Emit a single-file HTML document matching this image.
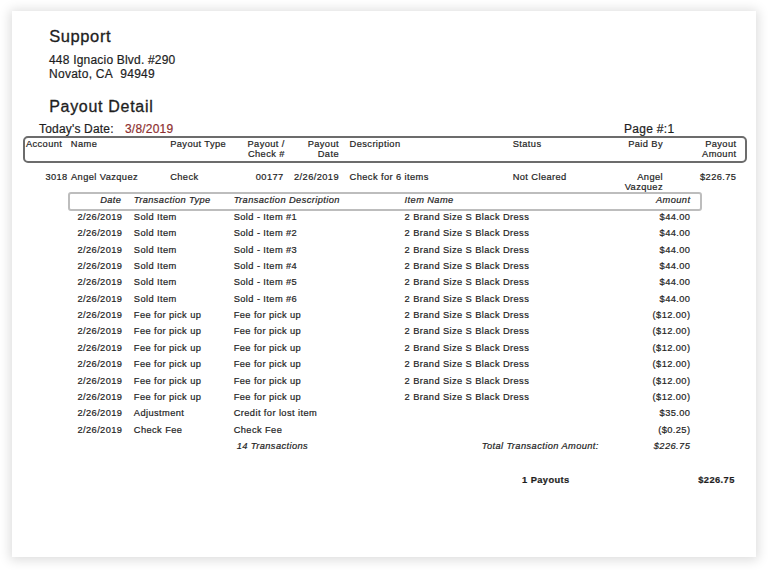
<!DOCTYPE html>
<html><head><meta charset="utf-8">
<style>
html,body{margin:0;padding:0;background:#fff;}
body{width:768px;height:570px;position:relative;overflow:hidden;font-family:"Liberation Sans",sans-serif;color:#1e1e1e;font-size:9.3px;letter-spacing:0.4px;}
#page{position:absolute;left:12px;top:10.5px;width:744px;height:546px;background:#fff;box-shadow:0 1px 11px 2px rgba(0,0,0,0.14);}
.t{position:absolute;white-space:nowrap;line-height:1;-webkit-text-stroke-width:0.2px;}
.i{font-style:italic;}
.b{font-weight:bold;}
.box{position:absolute;box-sizing:border-box;}
</style></head><body>
<div id="page"></div>
<div class="box" style="left:23px;top:136px;width:724px;height:27px;border:2px solid #6c6c6c;border-radius:5px;"></div>
<div class="box" style="left:68px;top:192px;width:634px;height:18.5px;border:2px solid #bdbdbd;border-radius:3px;"></div>
<div class="t" style="left:49.20px;top:28px;font-size:16.5px;letter-spacing:0.6px;-webkit-text-stroke-width:0.3px;">Support</div>
<div class="t" style="left:49.00px;top:54px;font-size:12px;letter-spacing:0.2px;">448 Ignacio Blvd. #290</div>
<div class="t" style="left:49.00px;top:68px;font-size:12px;letter-spacing:0.27px;">Novato, CA&nbsp; 94949</div>
<div class="t" style="left:49.20px;top:99px;font-size:16px;letter-spacing:0.7px;-webkit-text-stroke-width:0.3px;">Payout Detail</div>
<div class="t" style="left:39.00px;top:123px;font-size:12px;letter-spacing:0.18px;">Today's Date:</div>
<div class="t" style="left:125.00px;top:123px;font-size:12px;letter-spacing:0.2px;color:#8e3030;">3/8/2019</div>
<div class="t" style="left:624.00px;top:123px;font-size:12px;letter-spacing:0.29px;">Page #:1</div>
<div class="t" style="left:25.90px;top:140px;">Account</div>
<div class="t" style="left:70.80px;top:140px;">Name</div>
<div class="t" style="left:170.20px;top:140px;">Payout Type</div>
<div class="t" style="right:483.20px;top:140px;">Payout /</div>
<div class="t" style="right:483.20px;top:150px;">Check #</div>
<div class="t" style="right:429.00px;top:140px;">Payout</div>
<div class="t" style="right:429.00px;top:150px;">Date</div>
<div class="t" style="left:349.60px;top:140px;">Description</div>
<div class="t" style="left:512.70px;top:140px;">Status</div>
<div class="t" style="right:105.00px;top:140px;">Paid By</div>
<div class="t" style="right:31.50px;top:140px;">Payout</div>
<div class="t" style="right:31.50px;top:150px;">Amount</div>
<div class="t" style="right:700.30px;top:173px;">3018</div>
<div class="t" style="left:71.00px;top:173px;">Angel Vazquez</div>
<div class="t" style="left:170.20px;top:173px;">Check</div>
<div class="t" style="right:484.40px;top:173px;">00177</div>
<div class="t" style="right:429.00px;top:173px;">2/26/2019</div>
<div class="t" style="left:349.60px;top:173px;">Check for 6 items</div>
<div class="t" style="left:512.70px;top:173px;">Not Cleared</div>
<div class="t" style="right:105.00px;top:173px;">Angel</div>
<div class="t" style="right:105.00px;top:183px;">Vazquez</div>
<div class="t" style="right:31.60px;top:173px;">$226.75</div>
<div class="t i" style="right:646.60px;top:196px;">Date</div>
<div class="t i" style="left:133.80px;top:196px;">Transaction Type</div>
<div class="t i" style="left:233.70px;top:196px;">Transaction Description</div>
<div class="t i" style="left:404.60px;top:196px;">Item Name</div>
<div class="t i" style="right:77.60px;top:196px;">Amount</div>
<div class="t" style="right:645.60px;top:213px;">2/26/2019</div>
<div class="t" style="left:133.80px;top:213px;">Sold Item</div>
<div class="t" style="left:233.70px;top:213px;">Sold - Item #1</div>
<div class="t" style="left:404.60px;top:213px;">2 Brand Size S Black Dress</div>
<div class="t" style="right:77.60px;top:213px;">$44.00</div>
<div class="t" style="right:645.60px;top:229px;">2/26/2019</div>
<div class="t" style="left:133.80px;top:229px;">Sold Item</div>
<div class="t" style="left:233.70px;top:229px;">Sold - Item #2</div>
<div class="t" style="left:404.60px;top:229px;">2 Brand Size S Black Dress</div>
<div class="t" style="right:77.60px;top:229px;">$44.00</div>
<div class="t" style="right:645.60px;top:246px;">2/26/2019</div>
<div class="t" style="left:133.80px;top:246px;">Sold Item</div>
<div class="t" style="left:233.70px;top:246px;">Sold - Item #3</div>
<div class="t" style="left:404.60px;top:246px;">2 Brand Size S Black Dress</div>
<div class="t" style="right:77.60px;top:246px;">$44.00</div>
<div class="t" style="right:645.60px;top:262px;">2/26/2019</div>
<div class="t" style="left:133.80px;top:262px;">Sold Item</div>
<div class="t" style="left:233.70px;top:262px;">Sold - Item #4</div>
<div class="t" style="left:404.60px;top:262px;">2 Brand Size S Black Dress</div>
<div class="t" style="right:77.60px;top:262px;">$44.00</div>
<div class="t" style="right:645.60px;top:278px;">2/26/2019</div>
<div class="t" style="left:133.80px;top:278px;">Sold Item</div>
<div class="t" style="left:233.70px;top:278px;">Sold - Item #5</div>
<div class="t" style="left:404.60px;top:278px;">2 Brand Size S Black Dress</div>
<div class="t" style="right:77.60px;top:278px;">$44.00</div>
<div class="t" style="right:645.60px;top:295px;">2/26/2019</div>
<div class="t" style="left:133.80px;top:295px;">Sold Item</div>
<div class="t" style="left:233.70px;top:295px;">Sold - Item #6</div>
<div class="t" style="left:404.60px;top:295px;">2 Brand Size S Black Dress</div>
<div class="t" style="right:77.60px;top:295px;">$44.00</div>
<div class="t" style="right:645.60px;top:311px;">2/26/2019</div>
<div class="t" style="left:133.80px;top:311px;">Fee for pick up</div>
<div class="t" style="left:233.70px;top:311px;">Fee for pick up</div>
<div class="t" style="left:404.60px;top:311px;">2 Brand Size S Black Dress</div>
<div class="t" style="right:77.60px;top:311px;">($12.00)</div>
<div class="t" style="right:645.60px;top:327px;">2/26/2019</div>
<div class="t" style="left:133.80px;top:327px;">Fee for pick up</div>
<div class="t" style="left:233.70px;top:327px;">Fee for pick up</div>
<div class="t" style="left:404.60px;top:327px;">2 Brand Size S Black Dress</div>
<div class="t" style="right:77.60px;top:327px;">($12.00)</div>
<div class="t" style="right:645.60px;top:344px;">2/26/2019</div>
<div class="t" style="left:133.80px;top:344px;">Fee for pick up</div>
<div class="t" style="left:233.70px;top:344px;">Fee for pick up</div>
<div class="t" style="left:404.60px;top:344px;">2 Brand Size S Black Dress</div>
<div class="t" style="right:77.60px;top:344px;">($12.00)</div>
<div class="t" style="right:645.60px;top:360px;">2/26/2019</div>
<div class="t" style="left:133.80px;top:360px;">Fee for pick up</div>
<div class="t" style="left:233.70px;top:360px;">Fee for pick up</div>
<div class="t" style="left:404.60px;top:360px;">2 Brand Size S Black Dress</div>
<div class="t" style="right:77.60px;top:360px;">($12.00)</div>
<div class="t" style="right:645.60px;top:377px;">2/26/2019</div>
<div class="t" style="left:133.80px;top:377px;">Fee for pick up</div>
<div class="t" style="left:233.70px;top:377px;">Fee for pick up</div>
<div class="t" style="left:404.60px;top:377px;">2 Brand Size S Black Dress</div>
<div class="t" style="right:77.60px;top:377px;">($12.00)</div>
<div class="t" style="right:645.60px;top:393px;">2/26/2019</div>
<div class="t" style="left:133.80px;top:393px;">Fee for pick up</div>
<div class="t" style="left:233.70px;top:393px;">Fee for pick up</div>
<div class="t" style="left:404.60px;top:393px;">2 Brand Size S Black Dress</div>
<div class="t" style="right:77.60px;top:393px;">($12.00)</div>
<div class="t" style="right:645.60px;top:409px;">2/26/2019</div>
<div class="t" style="left:133.80px;top:409px;">Adjustment</div>
<div class="t" style="left:233.70px;top:409px;">Credit for lost item</div>
<div class="t" style="right:77.60px;top:409px;">$35.00</div>
<div class="t" style="right:645.60px;top:426px;">2/26/2019</div>
<div class="t" style="left:133.80px;top:426px;">Check Fee</div>
<div class="t" style="left:233.70px;top:426px;">Check Fee</div>
<div class="t" style="right:77.60px;top:426px;">($0.25)</div>
<div class="t i" style="left:236.70px;top:442px;">14 Transactions</div>
<div class="t i" style="left:481.70px;top:442px;">Total Transaction Amount:</div>
<div class="t i" style="right:77.80px;top:442px;">$226.75</div>
<div class="t b" style="left:522.10px;top:476px;">1 Payouts</div>
<div class="t b" style="right:33.30px;top:476px;">$226.75</div>
</body></html>
